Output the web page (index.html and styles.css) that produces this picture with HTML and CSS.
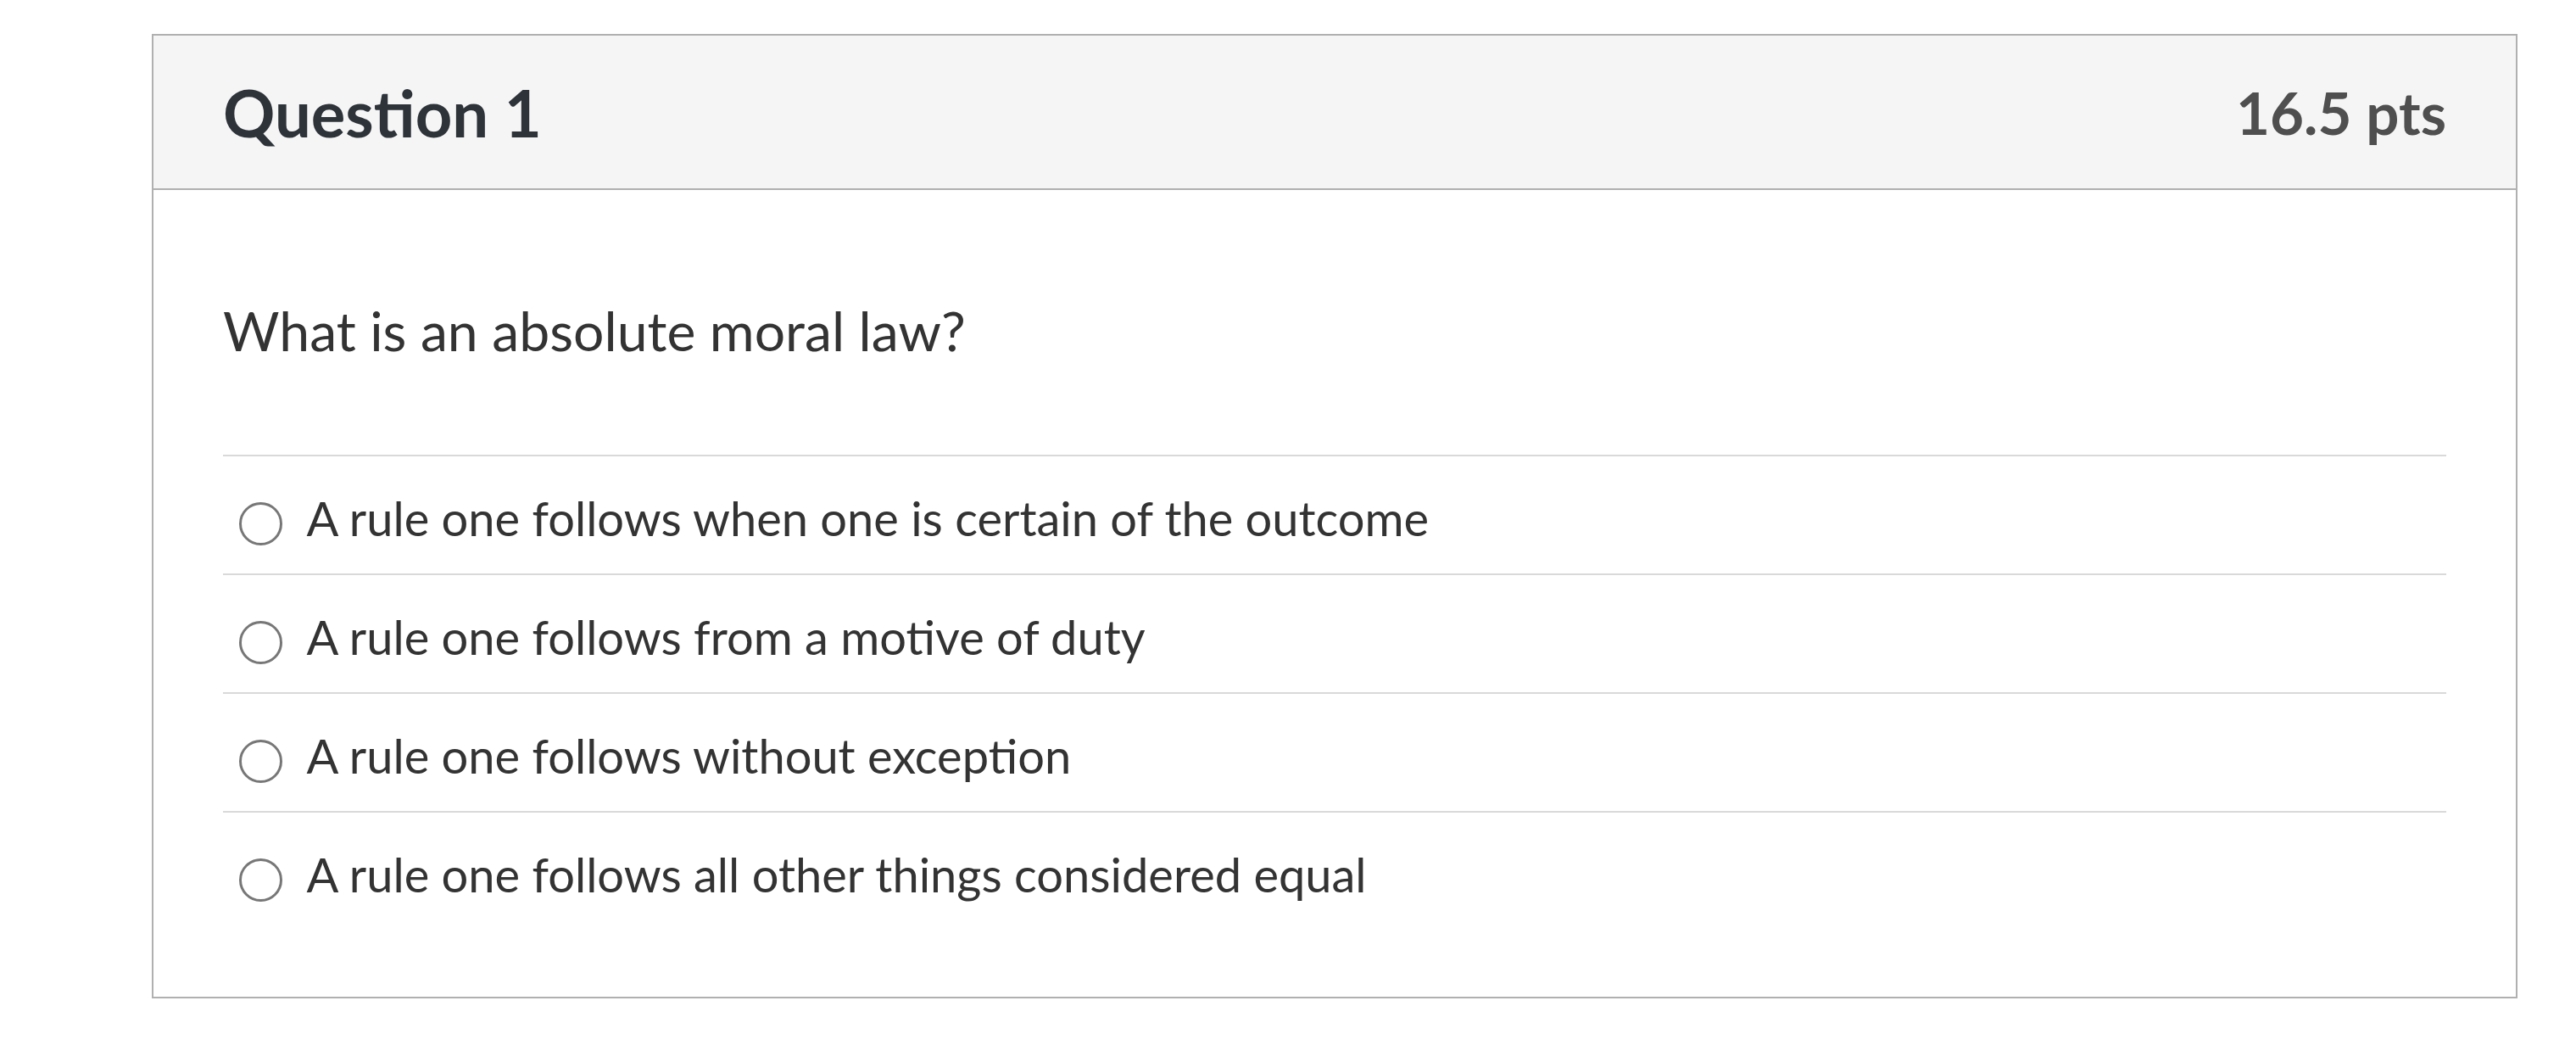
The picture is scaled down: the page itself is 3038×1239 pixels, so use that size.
FILE: index.html
```html
<!DOCTYPE html>
<html lang="en">
<head>
    <meta charset="UTF-8">
    <title>Question 1</title>
    <link rel="stylesheet" href="styles.css">
</head>
<body>
    <div class="quiz">
        <div class="question">
            <div class="question-header">
                <span class="question-name">Question 1</span>
                <span class="question-points">16.5 pts</span>
            </div>
            <div class="question-body">
                <div class="question-text">What is an absolute moral law?</div>
                <div class="answers">
                    <label class="answer">
                        <input type="radio" name="q1" class="answer-radio">
                        <span class="answer-text">A rule one follows when one is certain of the outcome</span>
                    </label>
                    <label class="answer">
                        <input type="radio" name="q1" class="answer-radio">
                        <span class="answer-text">A rule one follows from a motive of duty</span>
                    </label>
                    <label class="answer">
                        <input type="radio" name="q1" class="answer-radio">
                        <span class="answer-text">A rule one follows without exception</span>
                    </label>
                    <label class="answer">
                        <input type="radio" name="q1" class="answer-radio">
                        <span class="answer-text">A rule one follows all other things considered equal</span>
                    </label>
                </div>
            </div>
        </div>
    </div>
</body>
</html>
```

FILE: styles.css
```css
body {
    margin: 0;
    font-family: 'Lato', 'Liberation Sans', sans-serif;
    background-color: #ffffff;
    color: #2d3b45;
}

.quiz {
    padding: 40px 0 0 179px;
}

.question {
    width: 2790px;
    box-sizing: border-box;
    border: 2px solid #b0b0b0;
    background-color: #ffffff;
}

.question-header {
    display: flex;
    justify-content: space-between;
    align-items: center;
    height: 180px;
    padding: 0 82px;
    background-color: #f5f5f5;
    border-bottom: 2px solid #b0b0b0;
}

.question-name {
    font-size: 76px;
    font-weight: bold;
    color: #2d3339;
}

.question-points {
    font-size: 69px;
    font-weight: bold;
    color: #4f4f4f;
}

.question-body {
    padding: 118px 82px 79px;
}

.question-text {
    font-size: 64.3px;
    line-height: 96px;
    color: #333333;
    margin-bottom: 98px;
}

.answers {
    border-top: 2px solid #d9d9d9;
}

.answer {
    display: block;
    padding: 31px 0 23px 19px;
    font-size: 56px;
    line-height: 84px;
    color: #333333;
    border-bottom: 2px solid #d9d9d9;
}

.answer:last-child {
    border-bottom: none;
}

.answer-radio {
    appearance: none;
    -webkit-appearance: none;
    width: 51px;
    height: 51px;
    margin: 0 16px 0 0;
    box-sizing: border-box;
    border: 3px solid #777777;
    border-radius: 50%;
    background-color: #ffffff;
    vertical-align: middle;
}
```
